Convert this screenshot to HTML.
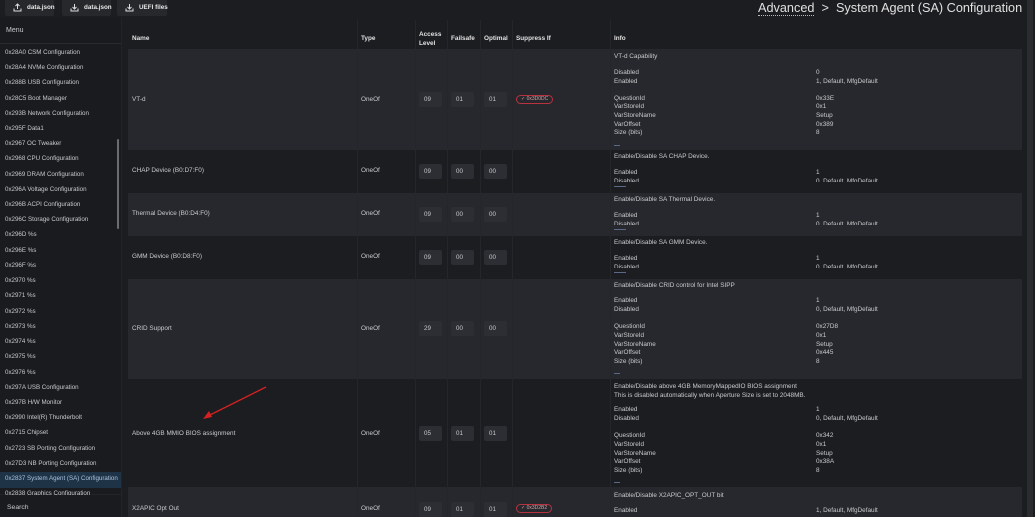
<!DOCTYPE html>
<html><head><meta charset="utf-8"><style>
*{margin:0;padding:0;box-sizing:border-box}
body{width:1035px;height:517px;background:#1c1d21;font-family:"Liberation Sans",sans-serif;color:#c9cacd;overflow:hidden;position:relative;font-size:6.4px}
.a{position:absolute;white-space:nowrap;line-height:8px}
.btn{position:absolute;top:0;height:16px;background:#26282c;border-radius:0 0 2px 2px;color:#e6e6e6;font-weight:bold;font-size:6.3px;line-height:16px;padding-left:22px;white-space:nowrap}
.btn svg{position:absolute;left:8px;top:3px}
.row{position:absolute;left:128px;width:894px}
.l{background:#26282d}
.d{background:#1c1d21}
.box{position:absolute;width:23px;height:15px;background:#2c2e33;border-radius:2px;font-size:6.2px;line-height:15px;padding-left:5px;color:#c9cacd}
.d .box{background:#2a2c31}
.vl{position:absolute;top:20px;bottom:0;width:1px;background:#24262a}
.pill{position:absolute;height:9px;border:1px solid #b8333f;border-radius:5px;font-size:5px;line-height:7px;padding:0 4px;color:#d9a0a5;white-space:nowrap}
.side{position:absolute;left:0;top:18px;width:122px;bottom:0;background:#1a1b1e;border-right:1px solid #232428}
.mi{position:absolute;left:5px;font-size:6.2px;color:#c8c9cc;line-height:8px;white-space:nowrap}
.dash{position:absolute;width:6px;height:1px;background:#5a6a86}
</style></head><body>
<div class="btn" style="left:5px;width:49px"><svg width="9" height="9" viewBox="0 0 9 9"><path d="M4.5 6V1M2.5 3L4.5 1 6.5 3M1 5.5V8H8V5.5" stroke="#ddd" fill="none" stroke-width="1"/></svg>data.json</div>
<div class="btn" style="left:62px;width:49px"><svg width="9" height="9" viewBox="0 0 9 9"><path d="M4.5 1V6M2.5 4L4.5 6 6.5 4M1 5.5V8H8V5.5" stroke="#ddd" fill="none" stroke-width="1"/></svg>data.json</div>
<div class="btn" style="left:117px;width:50px"><svg width="9" height="9" viewBox="0 0 9 9"><path d="M4.5 1V6M2.5 4L4.5 6 6.5 4M1 5.5V8H8V5.5" stroke="#ddd" fill="none" stroke-width="1"/></svg>UEFI files</div>
<div class="a" style="left:758px;top:0;font-size:12.7px;line-height:17px;color:#e0e0e0"><span style="border-bottom:1px dotted #bbb">Advanced</span> &nbsp;&gt;&nbsp; System Agent (SA) Configuration</div>
<div style="position:absolute;left:1027px;top:0;width:6px;height:517px;background:#2b2c30"></div>

<div class="side">
<div class="a" style="left:6px;top:9px;font-size:7px;color:#c8c9cc">Menu</div>
<div style="position:absolute;left:0;top:25px;width:121px;height:1px;background:#2a2b2f"></div>
<div style="position:absolute;left:0;top:454px;width:121px;height:16px;background:#1f3346"></div>
<div style="position:absolute;left:117px;top:121px;width:2px;height:90px;background:#6b6c70;border-radius:1px"></div>
<div class="a" style="left:7px;top:486px;font-size:6.8px;color:#c8c9cc">Search</div>
<div style="position:absolute;left:0;top:476px;width:121px;height:1px;background:#232428"></div>
</div>
<div class="mi" style="top:49px">0x28A0 CSM Configuration</div>
<div class="mi" style="top:64px">0x28A4 NVMe Configuration</div>
<div class="mi" style="top:79px">0x288B USB Configuration</div>
<div class="mi" style="top:95px">0x28C5 Boot Manager</div>
<div class="mi" style="top:110px">0x293B Network Configuration</div>
<div class="mi" style="top:125px">0x295F Data1</div>
<div class="mi" style="top:140px">0x2967 OC Tweaker</div>
<div class="mi" style="top:155px">0x2968 CPU Configuration</div>
<div class="mi" style="top:171px">0x2969 DRAM Configuration</div>
<div class="mi" style="top:186px">0x296A Voltage Configuration</div>
<div class="mi" style="top:201px">0x296B ACPI Configuration</div>
<div class="mi" style="top:216px">0x296C Storage Configuration</div>
<div class="mi" style="top:231px">0x296D %s</div>
<div class="mi" style="top:247px">0x296E %s</div>
<div class="mi" style="top:262px">0x296F %s</div>
<div class="mi" style="top:277px">0x2970 %s</div>
<div class="mi" style="top:292px">0x2971 %s</div>
<div class="mi" style="top:308px">0x2972 %s</div>
<div class="mi" style="top:323px">0x2973 %s</div>
<div class="mi" style="top:338px">0x2974 %s</div>
<div class="mi" style="top:353px">0x2975 %s</div>
<div class="mi" style="top:369px">0x2976 %s</div>
<div class="mi" style="top:384px">0x297A USB Configuration</div>
<div class="mi" style="top:399px">0x297B H/W Monitor</div>
<div class="mi" style="top:414px">0x2990 Intel(R) Thunderbolt</div>
<div class="mi" style="top:429px">0x2715 Chipset</div>
<div class="mi" style="top:445px">0x2723 SB Porting Configuration</div>
<div class="mi" style="top:460px">0x27D3 NB Porting Configuration</div>
<div class="mi" style="top:475px;color:#a9c4e0">0x2837 System Agent (SA) Configuration</div>
<div class="mi" style="top:490px;height:5px;overflow:hidden">0x2838 Graphics Configuration</div>

<div class="a" style="left:132px;top:35px;font-weight:bold;color:#e0e0e0">Name</div>
<div class="a" style="left:361px;top:35px;font-weight:bold;color:#e0e0e0">Type</div>
<div class="a" style="left:419px;top:30px;font-weight:bold;color:#e0e0e0;line-height:9px">Access<br>Level</div>
<div class="a" style="left:451px;top:35px;font-weight:bold;color:#e0e0e0">Failsafe</div>
<div class="a" style="left:484px;top:35px;font-weight:bold;color:#e0e0e0">Optimal</div>
<div class="a" style="left:516px;top:35px;font-weight:bold;color:#e0e0e0">Suppress If</div>
<div class="a" style="left:614px;top:35px;font-weight:bold;color:#e0e0e0">Info</div>

<div class="row l" style="top:49px;height:101px"></div>
<div class="row d" style="top:150px;height:43px"></div>
<div class="row l" style="top:193px;height:43px"></div>
<div class="row d" style="top:236px;height:43px"></div>
<div class="row l" style="top:279px;height:100px"></div>
<div class="row d" style="top:379px;height:108px"></div>
<div class="row l" style="top:487px;height:30px"></div>
<div class="vl" style="left:357px"></div><div class="vl" style="left:415px"></div><div class="vl" style="left:447px"></div><div class="vl" style="left:480px"></div><div class="vl" style="left:512px"></div><div class="vl" style="left:610px"></div>

<div class="a" style="left:132px;top:96px">VT-d</div><div class="a" style="left:361px;top:96px">OneOf</div>
<div class="box" style="left:419px;top:92px">09</div><div class="box" style="left:451px;top:92px">01</div><div class="box" style="left:484px;top:92px">01</div>
<div class="pill" style="left:516px;top:95px">✓ 0x3D0DC</div>

<div class="a" style="left:132px;top:167px">CHAP Device (B0:D7:F0)</div><div class="a" style="left:361px;top:167px">OneOf</div>
<div class="box" style="left:419px;top:164px">09</div><div class="box" style="left:451px;top:164px">00</div><div class="box" style="left:484px;top:164px">00</div>
<div class="a" style="left:132px;top:210px">Thermal Device (B0:D4:F0)</div><div class="a" style="left:361px;top:210px">OneOf</div>
<div class="box" style="left:419px;top:207px">09</div><div class="box" style="left:451px;top:207px">00</div><div class="box" style="left:484px;top:207px">00</div>
<div class="a" style="left:132px;top:253px">GMM Device (B0:D8:F0)</div><div class="a" style="left:361px;top:253px">OneOf</div>
<div class="box" style="left:419px;top:250px">09</div><div class="box" style="left:451px;top:250px">00</div><div class="box" style="left:484px;top:250px">00</div>
<div class="a" style="left:132px;top:325px">CRID Support</div><div class="a" style="left:361px;top:325px">OneOf</div>
<div class="box" style="left:419px;top:321px">29</div><div class="box" style="left:451px;top:321px">00</div><div class="box" style="left:484px;top:321px">00</div>
<div class="a" style="left:132px;top:430px">Above 4GB MMIO BIOS assignment</div><div class="a" style="left:361px;top:430px">OneOf</div>
<div class="box" style="left:419px;top:426px">05</div><div class="box" style="left:451px;top:426px">01</div><div class="box" style="left:484px;top:426px">01</div>
<div class="a" style="left:132px;top:505px">X2APIC Opt Out</div><div class="a" style="left:361px;top:505px">OneOf</div>
<div class="box" style="left:419px;top:502px">09</div><div class="box" style="left:451px;top:502px">01</div><div class="box" style="left:484px;top:502px">01</div>
<div class="pill" style="left:516px;top:504px">✓ 0x3D2B2</div>

<svg style="position:absolute;left:0;top:0" width="1035" height="517"><path d="M266 387L208 416" stroke="#d42020" stroke-width="1.3"/><path d="M203 419L209 411L212 417Z" fill="#d42020"/></svg>

<div class="a" style="left:614px;top:53px">VT-d Capability</div>
<div class="a" style="left:614px;top:69px;line-height:8.6px">Disabled<br>Enabled<br><br>QuestionId<br>VarStoreId<br>VarStoreName<br>VarOffset<br>Size (bits)</div>
<div class="a" style="left:816px;top:69px;line-height:8.6px">0<br>1, Default, MfgDefault<br><br>0x33E<br>0x1<br>Setup<br>0x389<br>8</div>
<div class="dash" style="left:614px;top:145px"></div>

<div class="a" style="left:614px;top:153px">Enable/Disable SA CHAP Device.</div>
<div class="a" style="left:614px;top:169px;height:13px;overflow:hidden;line-height:8.6px">Enabled<br>Disabled</div><div class="a" style="left:816px;top:169px;height:13px;overflow:hidden;line-height:8.6px">1<br>0, Default, MfgDefault</div>
<div class="dash" style="left:614px;top:186px;width:12px"></div>
<div class="a" style="left:614px;top:196px">Enable/Disable SA Thermal Device.</div>
<div class="a" style="left:614px;top:212px;height:13px;overflow:hidden;line-height:8.6px">Enabled<br>Disabled</div><div class="a" style="left:816px;top:212px;height:13px;overflow:hidden;line-height:8.6px">1<br>0, Default, MfgDefault</div>
<div class="dash" style="left:614px;top:229px;width:12px"></div>
<div class="a" style="left:614px;top:239px">Enable/Disable SA GMM Device.</div>
<div class="a" style="left:614px;top:255px;height:13px;overflow:hidden;line-height:8.6px">Enabled<br>Disabled</div><div class="a" style="left:816px;top:255px;height:13px;overflow:hidden;line-height:8.6px">1<br>0, Default, MfgDefault</div>
<div class="dash" style="left:614px;top:272px;width:12px"></div>

<div class="a" style="left:614px;top:282px">Enable/Disable CRID control for Intel SIPP</div>
<div class="a" style="left:614px;top:297px;line-height:8.7px">Enabled<br>Disabled<br><br>QuestionId<br>VarStoreId<br>VarStoreName<br>VarOffset<br>Size (bits)</div>
<div class="a" style="left:816px;top:297px;line-height:8.7px">1<br>0, Default, MfgDefault<br><br>0x27D8<br>0x1<br>Setup<br>0x445<br>8</div>
<div class="dash" style="left:614px;top:373px"></div>

<div class="a" style="left:614px;top:382px;line-height:9px">Enable/Disable above 4GB MemoryMappedIO BIOS assignment<br>This is disabled automatically when Aperture Size is set to 2048MB.</div>
<div class="a" style="left:614px;top:406px;line-height:8.7px">Enabled<br>Disabled<br><br>QuestionId<br>VarStoreId<br>VarStoreName<br>VarOffset<br>Size (bits)</div>
<div class="a" style="left:816px;top:406px;line-height:8.7px">1<br>0, Default, MfgDefault<br><br>0x342<br>0x1<br>Setup<br>0x38A<br>8</div>
<div class="dash" style="left:614px;top:482px"></div>

<div class="a" style="left:614px;top:492px">Enable/Disable X2APIC_OPT_OUT bit</div>
<div class="a" style="left:614px;top:507px">Enabled</div><div class="a" style="left:816px;top:507px">1, Default, MfgDefault</div>
</body></html>
